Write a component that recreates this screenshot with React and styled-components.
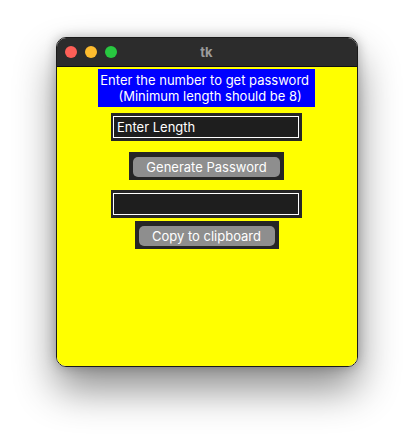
import React from 'react';
import styled, { createGlobalStyle } from 'styled-components';

const GlobalStyle = createGlobalStyle`
  html, body {
    margin: 0;
    padding: 0;
    background: #ffffff;
  }
  body {
    font-family: Inter, 'Liberation Sans', Arial, sans-serif;
  }
`;

const Page = styled.div`
  width: 412px;
  height: 440px;
  padding-top: 37px;
  box-sizing: border-box;
  display: flex;
  justify-content: center;
`;

const Window = styled.div`
  width: 302px;
  height: 330px;
  box-sizing: border-box;
  border: 1px solid #1a1a1a;
  border-radius: 10px;
  overflow: hidden;
  display: flex;
  flex-direction: column;
  margin-left: 1px;
  box-shadow: 0 22px 40px rgba(0, 0, 0, 0.45), 0 0 12px rgba(0, 0, 0, 0.25);
`;

const TitleBar = styled.div`
  height: 28px;
  flex-shrink: 0;
  background: #2c2c2c;
  border-bottom: 1px solid #111;
  display: flex;
  align-items: center;
  position: relative;
  padding-left: 8px;
  gap: 8px;
`;

const Light = styled.span`
  width: 12px;
  height: 12px;
  border-radius: 50%;
  background: ${(p) => p.$color};
`;

const Title = styled.div`
  position: absolute;
  left: 0;
  right: 0;
  top: 0;
  bottom: 0;
  display: flex;
  align-items: center;
  justify-content: center;
  color: #9b9b9b;
  font-weight: bold;
  font-size: 13px;
  pointer-events: none;
`;

const Content = styled.div`
  flex: 1;
  background: #ffff00;
  display: flex;
  flex-direction: column;
  align-items: center;
  padding-top: 2px;
`;

const Label = styled.div`
  width: 217px;
  height: 38px;
  box-sizing: border-box;
  background: #0000ff;
  color: #ffffff;
  font-size: 13px;
  line-height: 16px;
  text-align: center;
  padding-top: 3px;
  white-space: pre;
`;

const EntryFrame = styled.div`
  width: 191px;
  height: 28px;
  box-sizing: border-box;
  background: #262626;
  padding: 3px 3px 3px 2px;
  margin-top: ${(p) => p.$top}px;
`;

const EntryBox = styled.div`
  height: 100%;
  box-sizing: border-box;
  border: 1px solid #ffffff;
  background: #1e1e1e;
  color: #ffffff;
  font-size: 13px;
  display: flex;
  align-items: center;
  padding-left: 3px;
`;

const ButtonFrame = styled.div`
  width: ${(p) => p.$width}px;
  height: 28px;
  box-sizing: border-box;
  background: #262626;
  padding: 5px 4px 2px 4px;
  margin-top: ${(p) => p.$top}px;
`;

const Pill = styled.div`
  height: 20px;
  border-radius: 5px;
  background: #8e8e8e;
  color: #ffffff;
  font-size: 13px;
  display: flex;
  align-items: center;
  justify-content: center;
`;

export default function App() {
  return (
    <>
      <GlobalStyle />
      <Page>
        <Window>
          <TitleBar>
            <Light $color="#fe5f57" />
            <Light $color="#febc2e" />
            <Light $color="#28c840" />
            <Title>tk</Title>
          </TitleBar>
          <Content>
            <Label>{'Enter the number to get password \n  (Minimum length should be 8)'}</Label>
            <EntryFrame $top={6}>
              <EntryBox>Enter Length</EntryBox>
            </EntryFrame>
            <ButtonFrame $width={155} $top={11}>
              <Pill>Generate Password</Pill>
            </ButtonFrame>
            <EntryFrame $top={10}>
              <EntryBox />
            </EntryFrame>
            <ButtonFrame $width={144} $top={3}>
              <Pill>Copy to clipboard</Pill>
            </ButtonFrame>
          </Content>
        </Window>
      </Page>
    </>
  );
}
